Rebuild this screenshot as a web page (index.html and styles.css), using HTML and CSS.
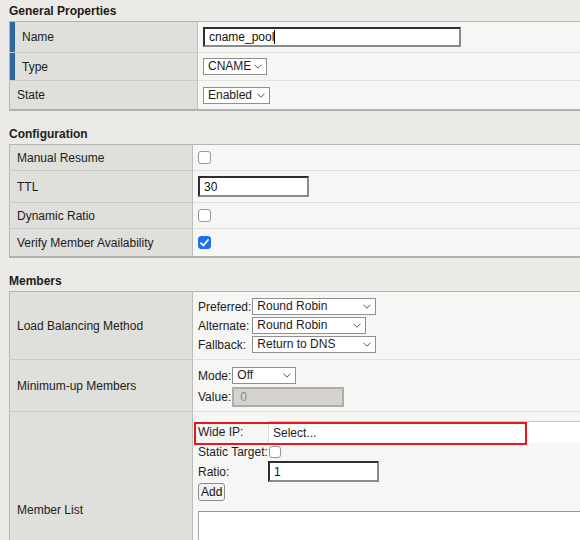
FILE: index.html
```html
<!DOCTYPE html>
<html lang="en">
<head>
<meta charset="utf-8">
<title>Pool Properties</title>
<link rel="stylesheet" href="styles.css">
</head>
<body>
<div class="page">

  <section class="group">
    <h2 class="group-title">General Properties</h2>
    <table class="props props-general">
      <colgroup><col class="col-label-wide"><col></colgroup>
      <tr class="row-30">
        <th class="label required">Name</th>
        <td class="value"><div class="textbox textbox-name">cname_pool<span class="caret"></span></div></td>
      </tr>
      <tr class="row-27">
        <th class="label required">Type</th>
        <td class="value"><div class="select select-cname"><span>CNAME</span><svg class="chev" width="8" height="5" viewBox="0 0 8 5"><path d="M0.5 0.7 L4 4.2 L7.5 0.7" fill="none" stroke="#555" stroke-width="1"/></svg></div></td>
      </tr>
      <tr class="row-28">
        <th class="label">State</th>
        <td class="value"><div class="select select-enabled"><span>Enabled</span><svg class="chev" width="8" height="5" viewBox="0 0 8 5"><path d="M0.5 0.7 L4 4.2 L7.5 0.7" fill="none" stroke="#555" stroke-width="1"/></svg></div></td>
      </tr>
    </table>
  </section>

  <section class="group">
    <h2 class="group-title">Configuration</h2>
    <table class="props">
      <colgroup><col class="col-label"><col></colgroup>
      <tr class="row-25">
        <th class="label">Manual Resume</th>
        <td class="value"><span class="check"></span></td>
      </tr>
      <tr class="row-31">
        <th class="label">TTL</th>
        <td class="value"><input class="textbox textbox-short" type="text" value="30"></td>
      </tr>
      <tr class="row-25">
        <th class="label">Dynamic Ratio</th>
        <td class="value"><span class="check"></span></td>
      </tr>
      <tr class="row-27">
        <th class="label">Verify Member Availability</th>
        <td class="value"><span class="check checked"><svg width="9" height="8" viewBox="0 0 9 8"><path d="M1 4.2 L3.4 6.6 L8 1" fill="none" stroke="#fff" stroke-width="1.8" stroke-linecap="round" stroke-linejoin="round"/></svg></span></td>
      </tr>
    </table>
  </section>

  <section class="group">
    <h2 class="group-title">Members</h2>
    <table class="props">
      <colgroup><col class="col-label"><col></colgroup>
      <tr>
        <th class="label">Load Balancing Method</th>
        <td class="value">
          <div class="field-grid lb-grid">
            <span>Preferred:</span>
            <div class="select select-lb"><span>Round Robin</span><svg class="chev" width="8" height="5" viewBox="0 0 8 5"><path d="M0.5 0.7 L4 4.2 L7.5 0.7" fill="none" stroke="#555" stroke-width="1"/></svg></div>
            <span>Alternate:</span>
            <div class="select select-alt"><span>Round Robin</span><svg class="chev" width="8" height="5" viewBox="0 0 8 5"><path d="M0.5 0.7 L4 4.2 L7.5 0.7" fill="none" stroke="#555" stroke-width="1"/></svg></div>
            <span>Fallback:</span>
            <div class="select select-lb"><span>Return to DNS</span><svg class="chev" width="8" height="5" viewBox="0 0 8 5"><path d="M0.5 0.7 L4 4.2 L7.5 0.7" fill="none" stroke="#555" stroke-width="1"/></svg></div>
          </div>
        </td>
      </tr>
      <tr>
        <th class="label">Minimum-up Members</th>
        <td class="value">
          <div class="field-grid min-grid">
            <span>Mode:</span>
            <div class="select select-mode"><span>Off</span><svg class="chev" width="8" height="5" viewBox="0 0 8 5"><path d="M0.5 0.7 L4 4.2 L7.5 0.7" fill="none" stroke="#555" stroke-width="1"/></svg></div>
            <span>Value:</span>
            <input class="textbox textbox-disabled" type="text" value="0" disabled>
          </div>
        </td>
      </tr>
      <tr>
        <th class="label">Member List</th>
        <td class="value value-top">
          <div class="member-form">
            <div class="wideip-row">
              <span class="member-label">Wide IP:</span>
              <div class="combo">Select...</div>
              <span class="highlight"></span>
            </div>
            <div class="static-row">
              <span>Static Target:</span>
              <span class="check check-small"></span>
            </div>
            <div class="ratio-row">
              <span class="member-label">Ratio:</span>
              <input class="textbox textbox-short" type="text" value="1">
            </div>
            <button class="btn" type="button">Add</button>
            <textarea class="member-box"></textarea>
          </div>
        </td>
      </tr>
    </table>
  </section>

</div>
</body>
</html>
```

FILE: styles.css
```css
html, body {
  margin: 0;
  background: #ebeae6;
}

body {
  width: 580px;
  height: 540px;
  overflow: hidden;
  font-family: "Liberation Sans", Arial, sans-serif;
  font-size: 12px;
  color: #1c1c1c;
}

.page {
  padding: 3px 0 0 9px;
}

.group + .group {
  margin-top: 15px;
}

.group-title {
  margin: 0 0 2px;
  padding-top: 1px;
  font-size: 12px;
  font-weight: bold;
  line-height: 15px;
}

.props {
  border-collapse: collapse;
  table-layout: fixed;
  width: 640px;
  border: 1px solid #b4b4b1;
  border-bottom: 2px solid #b0b0ad;
}

.col-label-wide { width: 188px; }
.col-label { width: 183px; }

.label {
  text-align: left;
  font-weight: normal;
  background: #dfdfdb;
  padding: 0 0 0 7px;
  border-right: 1px solid #bdbdb9;
  border-bottom: 1px solid #c9c9c5;
  vertical-align: middle;
  white-space: nowrap;
}

.label.required {
  padding-left: 12px;
  box-shadow: inset 5px 0 0 #2d68a2;
}

.value {
  background: #f6f6f4;
  padding: 0 5px;
  border-bottom: 1px solid #e0e0dd;
  vertical-align: middle;
}

.value-top {
  vertical-align: top;
}

.row-25 > * { height: 25px; }
.row-27 > * { height: 27px; }
.row-28 > * { height: 28px; }
.row-30 > * { height: 30px; }
.row-31 > * { height: 31px; }

/* text boxes */
.textbox {
  box-sizing: border-box;
  display: block;
  margin: 0;
  background: #fff;
  border: 2px solid;
  border-color: #2e2e2e #8a8a8a #8a8a8a #2e2e2e;
  padding: 0 4px;
  font: inherit;
  color: #111;
  outline: none;
}

.textbox-name {
  width: 258px;
  height: 20px;
  display: flex;
  align-items: center;
  padding-left: 4px;
}

.caret {
  display: inline-block;
  width: 1px;
  height: 14px;
  background: #000;
}

.textbox-short {
  width: 111px;
  height: 21px;
}

.textbox-disabled {
  width: 112px;
  height: 20px;
  background: #d6d3ce;
  border-color: #aeaca8;
  color: #8d8b88;
  padding-left: 6px;
}

/* selects */
.select {
  box-sizing: border-box;
  display: flex;
  align-items: center;
  justify-content: space-between;
  height: 17px;
  background: #fff;
  border: 1px solid #8f8f8f;
  padding: 0 4px 0 4px;
  line-height: 15px;
}

.chev { display: block; flex: none; }

.select-cname { width: 64px; }
.select-enabled { width: 67px; }
.select-lb { width: 124px; }
.select-alt { width: 114px; }
.select-mode { width: 64px; }

/* checkboxes */
.check {
  box-sizing: border-box;
  display: flex;
  align-items: center;
  justify-content: center;
  width: 13px;
  height: 13px;
  border: 1px solid #979797;
  border-radius: 3px;
  background: #fff;
}

.check.checked {
  background: #1b6ff0;
  border-color: #1b6ff0;
}

/* field grids */
.field-grid {
  display: grid;
  grid-template-columns: auto auto;
  justify-content: start;
  align-items: center;
  column-gap: 1px;
}

.lb-grid {
  row-gap: 2px;
  padding: 6px 0 6px;
}

.min-grid {
  row-gap: 3px;
  padding: 7px 0 4px;
}

/* member list */
.member-form {
  display: flex;
  flex-direction: column;
  align-items: flex-start;
  padding: 9px 0 10px;
}

.member-label {
  width: 70px;
  flex: none;
}

.wideip-row {
  position: relative;
  display: flex;
  align-items: stretch;
  align-self: stretch;
  height: 22px;
  margin-right: -5px;
}

.wideip-row .member-label {
  display: flex;
  align-items: center;
}

.combo {
  flex: 1;
  display: flex;
  align-items: center;
  background: #fff;
  border-top: 1px solid #c6c6c4;
  border-left: 1px solid #dcdcda;
  padding-left: 4px;
}

.highlight {
  position: absolute;
  left: -4px;
  top: 1px;
  width: 333px;
  height: 23px;
  box-sizing: border-box;
  border: 2px solid #e8161d;
}

.static-row {
  display: flex;
  align-items: center;
  height: 17px;
}

.check-small {
  width: 12px;
  height: 12px;
  margin-left: 1px;
}

.ratio-row {
  display: flex;
  align-items: center;
  margin-top: 1px;
}

.btn {
  margin-top: 1px;
  height: 18px;
  padding: 0 2px;
  font: inherit;
  color: #111;
  background: #f3f3f3;
  border: 1px solid #8c8c8c;
  border-radius: 3px;
  line-height: 16px;
}

.member-box {
  display: block;
  box-sizing: border-box;
  margin-top: 10px;
  width: 420px;
  height: 86px;
  border: 1px solid #a8a8a8;
  border-top-color: #9a9a9a;
  background: #fff;
  resize: none;
  font: inherit;
}
```
